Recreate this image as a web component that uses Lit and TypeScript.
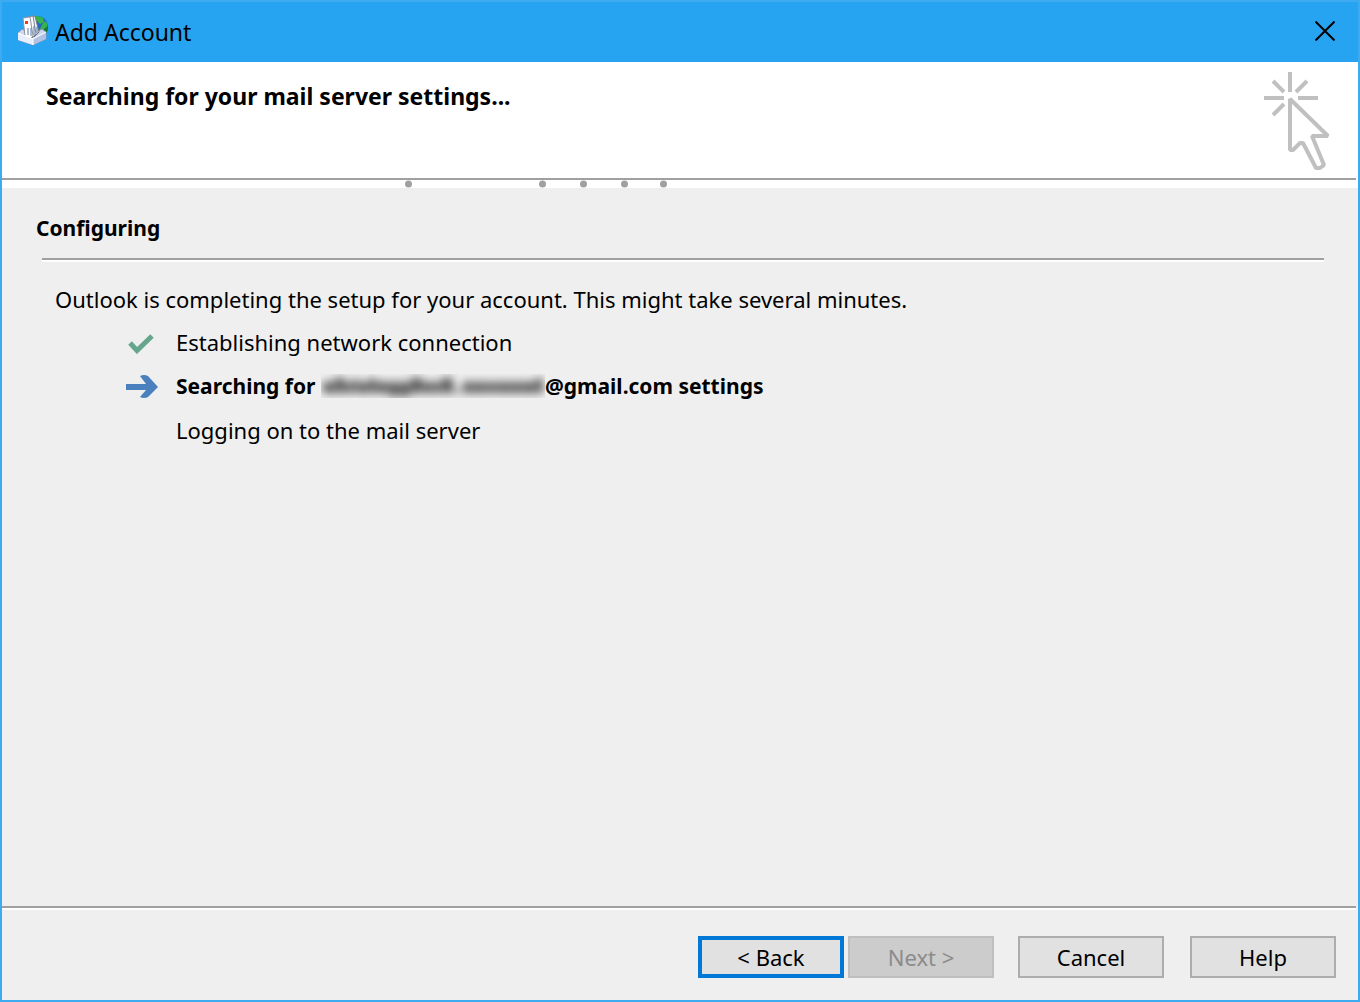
import { LitElement, html, css, svg } from "lit";
import { customElement } from "lit/decorators.js";

const DOTS = [408, 542, 583, 624, 663];
// Strokes of the concealed part of the address: x, y, width, height.
const SMUDGES = [
  [2, 8, 11, 11], [14, 4, 9, 15], [24, 8, 7, 11], [32, 5, 4, 14], [37, 8, 10, 11],
  [48, 5, 7, 14], [56, 8, 11, 11], [68, 8, 10, 14], [79, 8, 10, 14], [90, 4, 11, 15],
  [102, 8, 10, 11], [113, 8, 7, 11], [121, 4, 11, 15], [134, 15, 5, 4], [142, 8, 10, 11],
  [153, 8, 10, 11], [164, 8, 7, 11], [172, 8, 7, 11], [180, 8, 10, 11], [191, 8, 10, 11],
  [202, 8, 11, 11], [214, 5, 8, 14],
];

@customElement("app-root")
export class AppRoot extends LitElement {
  static styles = css`
    :host {
      display: block;
      font-family: "Noto Sans", "Open Sans", sans-serif;
      font-size: 22px;
      line-height: 44px;
      color: #000;
    }
    * { box-sizing: border-box; }
    svg { display: block; flex: none; }
    .window {
      display: flex;
      flex-direction: column;
      min-height: 100vh;
      border: 2px solid #3eabf1;
      background: #efefef;
    }
    .titlebar {
      display: flex;
      align-items: center;
      height: 60px;
      padding: 0 16px 2px;
      gap: 5px;
      background: #26a4f2;
    }
    .title { flex: 1; margin: 0; font-size: 23px; font-weight: 400; line-height: 58px; padding-top: 2px; }
    .close {
      display: grid;
      place-items: center;
      width: 34px;
      height: 34px;
      padding: 0;
      border: 0;
      background: none;
    }
    .header {
      display: flex;
      justify-content: space-between;
      height: 116px;
      padding: 8px 28px 0 44px;
      background: #fff;
    }
    h2, h3 { margin: 0; font-size: 23px; font-weight: 700; line-height: 52px; }
    h3 { font-size: 21px; }
    .progress {
      position: relative;
      height: 10px;
      background: linear-gradient(#a0a0a0, #a0a0a0) no-repeat 0 0 / calc(100% - 2px) 2px, #fff;
    }
    .dots { position: absolute; top: 2px; left: 0; }
    .content { flex: 1; padding: 14px 34px 0 34px; }
    .rule { height: 4px; border-top: 2px solid #a0a0a0; background: #fff; }
    .content .rule { margin: 4px 0 0 6px; }
    .message { margin: 16px 0 0 19px; line-height: 42px; }
    .steps { list-style: none; margin: 0; padding: 0 0 0 90px; }
    .step { display: grid; grid-template-columns: 34px 1fr; gap: 16px; align-items: center; height: 44px; }
    .label { display: flex; align-items: center; white-space: pre; }
    .active { font-weight: 700; font-size: 21px; }
    .footer { margin-right: 2px; }
    .buttons { display: flex; justify-content: flex-end; padding: 26px 20px 22px; }
    .btn {
      width: 146px;
      height: 42px;
      padding: 0;
      border: 2px solid #adadad;
      border-radius: 0;
      background: #e1e1e1;
      color: #000;
      font: inherit;
      line-height: 38px;
    }
    .btn:disabled { border-color: #bfbfbf; background: #ccc; color: #8b8b8b; }
    .primary { border: 4px solid #0078d7; line-height: 34px; }
    .next { margin-left: 4px; }
    .cancel { margin-left: 24px; }
    .help { margin-left: 26px; }
  `;

  private mailIcon() {
    return svg`<svg width="32" height="34" viewBox="0 0 32 34" aria-hidden="true">
      <circle cx="19.500" cy="12.500" r="10.500" fill="#2467bd"/>
      <path d="M13 4Q19 0 25 4L26 8L22 10L18 6ZM25 9L28 7Q31 14 27 19L24 21L22 15Z" fill="#35b44b"/>
      <path d="M26 15L30 12Q30 20 25 22Z" fill="#15752e"/>
      <path d="M0 19L4 15L14 20L24 15L28 18V25L15 31L0 26Z" fill="#cbd7ee" stroke="#8292b8"/>
      <path d="M12 3L17 2L21 18L16 23Z" fill="#eef1f8" stroke="#6e7583"/>
      <path d="M9 3L15 2L18 20L14 24Z" fill="#f8f9fd" stroke="#7f8592"/>
      <path d="M5 4L12 3L15 22L12 25L7 22Z" fill="#fff" stroke="#8c94a4"/>
      <path d="M0 19L15 25V31L0 26Z" fill="#e8effc"/>
      <path d="M15 25L28 18V25L15 31Z" fill="#b2c2e5"/>
      <path d="M0 19L15 25L28 18M15 25V31" fill="none" stroke="#fff"/>
      <path d="M7 7H10V10H7Z" fill="#f03c1e"/>
      <path d="M10 14V21M13 14V22M16 12V21M19 13V19" stroke="#5672a4"/>
    </svg>`;
  }

  private cursorIcon() {
    return svg`<svg width="66" height="102" viewBox="0 0 66 102" fill="none" stroke="#c0c0c0" stroke-width="4" aria-hidden="true">
      <path d="M26 2V22M0 28H20M34 28H54M9 11L20 22M43 11L32 22M9 45L20 34"/>
      <path d="M26 29V80H29L36 73H39L52 98H56L60 95L48 66H64Z" stroke-linejoin="bevel"/>
    </svg>`;
  }

  render() {
    return html`
      <main class="window">
        <header class="titlebar">
          ${this.mailIcon()}
          <h1 class="title">Add Account</h1>
          <button class="close" aria-label="Close">
            <svg width="20" height="20" viewBox="0 0 20 20" stroke="#000" stroke-width="2"><path d="M.5 .5L19.500 19.500M19.500 .5L.5 19.500"/></svg>
          </button>
        </header>
        <section class="header">
          <h2>Searching for your mail server settings...</h2>
          ${this.cursorIcon()}
        </section>
        <div class="progress" role="progressbar" aria-label="Searching">
          <svg class="dots" width="700" height="8" fill="#a0a0a0">
            ${DOTS.map((x) => svg`<circle cx=${x - 1.5} cy="4" r="3.500"/>`)}
          </svg>
        </div>
        <section class="content">
          <h3>Configuring</h3>
          <div class="rule"></div>
          <p class="message">Outlook is completing the setup for your account. This might take several minutes.</p>
          <ul class="steps">
            <li class="step">
              <svg width="34" height="24" viewBox="0 0 34 24" aria-hidden="true"><path d="M4 13L11 20.500L26 6" fill="none" stroke="#65a68d" stroke-width="5"/></svg>
              <span class="label">Establishing network connection</span>
            </li>
            <li class="step active">
              <svg width="34" height="24" viewBox="0 0 34 24" aria-hidden="true"><path d="M0 10H20L14 2Q18 0 22 2L32 13L22 23Q18 25 14 23L20 16H0Z" fill="#4a80bd"/></svg>
              <span class="label">Searching for <svg width="224" height="24" viewBox="0 0 224 24" aria-hidden="true">
                <defs><filter id="haze" x="-5%" y="-30%" width="110%" height="160%"><feGaussianBlur stdDeviation="4 5"/></filter></defs>
                <g filter="url(#haze)" fill="#555">${SMUDGES.map(([x, y, w, h]) => svg`<rect x=${x} y=${y} width=${w} height=${h}/>`)}</g>
              </svg>@gmail.com settings</span>
            </li>
            <li class="step">
              <span></span>
              <span class="label">Logging on to the mail server</span>
            </li>
          </ul>
        </section>
        <footer class="footer">
          <div class="rule"></div>
          <div class="buttons">
            <button class="btn primary">&lt; Back</button>
            <button class="btn next" disabled>Next &gt;</button>
            <button class="btn cancel">Cancel</button>
            <button class="btn help">Help</button>
          </div>
        </footer>
      </main>
    `;
  }
}
